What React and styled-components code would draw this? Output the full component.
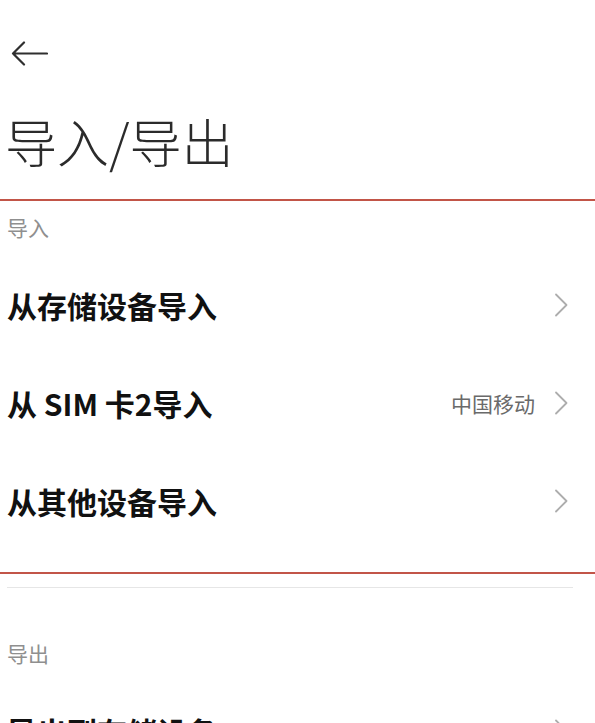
import React from "react";
import styled, { createGlobalStyle } from "styled-components";

const GlobalStyle = createGlobalStyle`
  body {
    margin: 0;
    background: #ffffff;
    font-family: "Noto Sans CJK SC", "Noto Sans", sans-serif;
    color: #111111;
  }
`;

const Page = styled.div`
  width: 595px;
  height: 723px;
  overflow: hidden;
  background: #ffffff;
`;

const NavBar = styled.div`
  height: 110px;
  display: flex;
  align-items: center;
  padding-left: 11px;
  box-sizing: border-box;

  & svg {
    display: block;
    margin-top: -3px;
  }
`;

const PageTitle = styled.h1`
  margin: 0 0 27px 5px;
  font-size: 52px;
  line-height: 62px;
  font-weight: 300;
  color: #2b2b2b;
  letter-spacing: 0;
`;

const Section = styled.section`
  border-top: ${(p) => (p.highlight ? "2px solid #c25548" : "none")};
  border-bottom: ${(p) => (p.highlight ? "2px solid #c25548" : "none")};
  padding-top: ${(p) => p.top}px;
  padding-bottom: ${(p) => p.bottom}px;
`;

const SectionLabel = styled.div`
  font-size: 21px;
  line-height: 28px;
  color: #8f8f8f;
  padding-left: 7px;
  margin-bottom: 15px;
`;

const Divider = styled.div`
  height: 1px;
  background: #e6e6e6;
  margin: 13px 22px 0 7px;
`;

const Row = styled.div`
  height: 98px;
  display: flex;
  align-items: center;
  padding: 0 27px 0 7px;
`;

const RowTitle = styled.div`
  flex: 1;
  font-size: 30px;
  line-height: 40px;
  font-weight: 700;
  color: #111111;
  white-space: nowrap;
`;

const RowValue = styled.span`
  font-size: 21px;
  color: #6a6a6a;
  margin-right: 19px;
`;

const Chevron = () => (
  <svg width="14" height="24" viewBox="0 0 14 24" fill="none">
    <path
      d="M2 1.5 L12.5 12 L2 22.5"
      stroke="#adadad"
      strokeWidth="1.8"
      strokeLinecap="round"
      strokeLinejoin="round"
    />
  </svg>
);

const BackArrow = () => (
  <svg width="37" height="25" viewBox="0 0 37 25" fill="none">
    <path
      d="M2 12.5 H36 M13 1.5 L2 12.5 L13 23.5"
      stroke="#2f2f2f"
      strokeWidth="2.2"
      strokeLinecap="round"
      strokeLinejoin="round"
    />
  </svg>
);

const importItems = [
  { title: "从存储设备导入" },
  { title: "从 SIM 卡2导入", value: "中国移动" },
  { title: "从其他设备导入" },
];

const exportItems = [{ title: "导出到存储设备" }];

const SettingRow = ({ title, value }) => (
  <Row>
    <RowTitle>{title}</RowTitle>
    {value && <RowValue>{value}</RowValue>}
    <Chevron />
  </Row>
);

const App = () => {
  return (
    <Page>
      <GlobalStyle />
      <NavBar>
        <BackArrow />
      </NavBar>
      <PageTitle>导入/导出</PageTitle>
      <Section highlight top={12} bottom={22}>
        <SectionLabel>导入</SectionLabel>
        {importItems.map((item) => (
          <SettingRow key={item.title} {...item} />
        ))}
      </Section>
      <Divider />
      <Section top={51} bottom={0}>
        <SectionLabel>导出</SectionLabel>
        {exportItems.map((item) => (
          <SettingRow key={item.title} {...item} />
        ))}
      </Section>
    </Page>
  );
};

export default App;
